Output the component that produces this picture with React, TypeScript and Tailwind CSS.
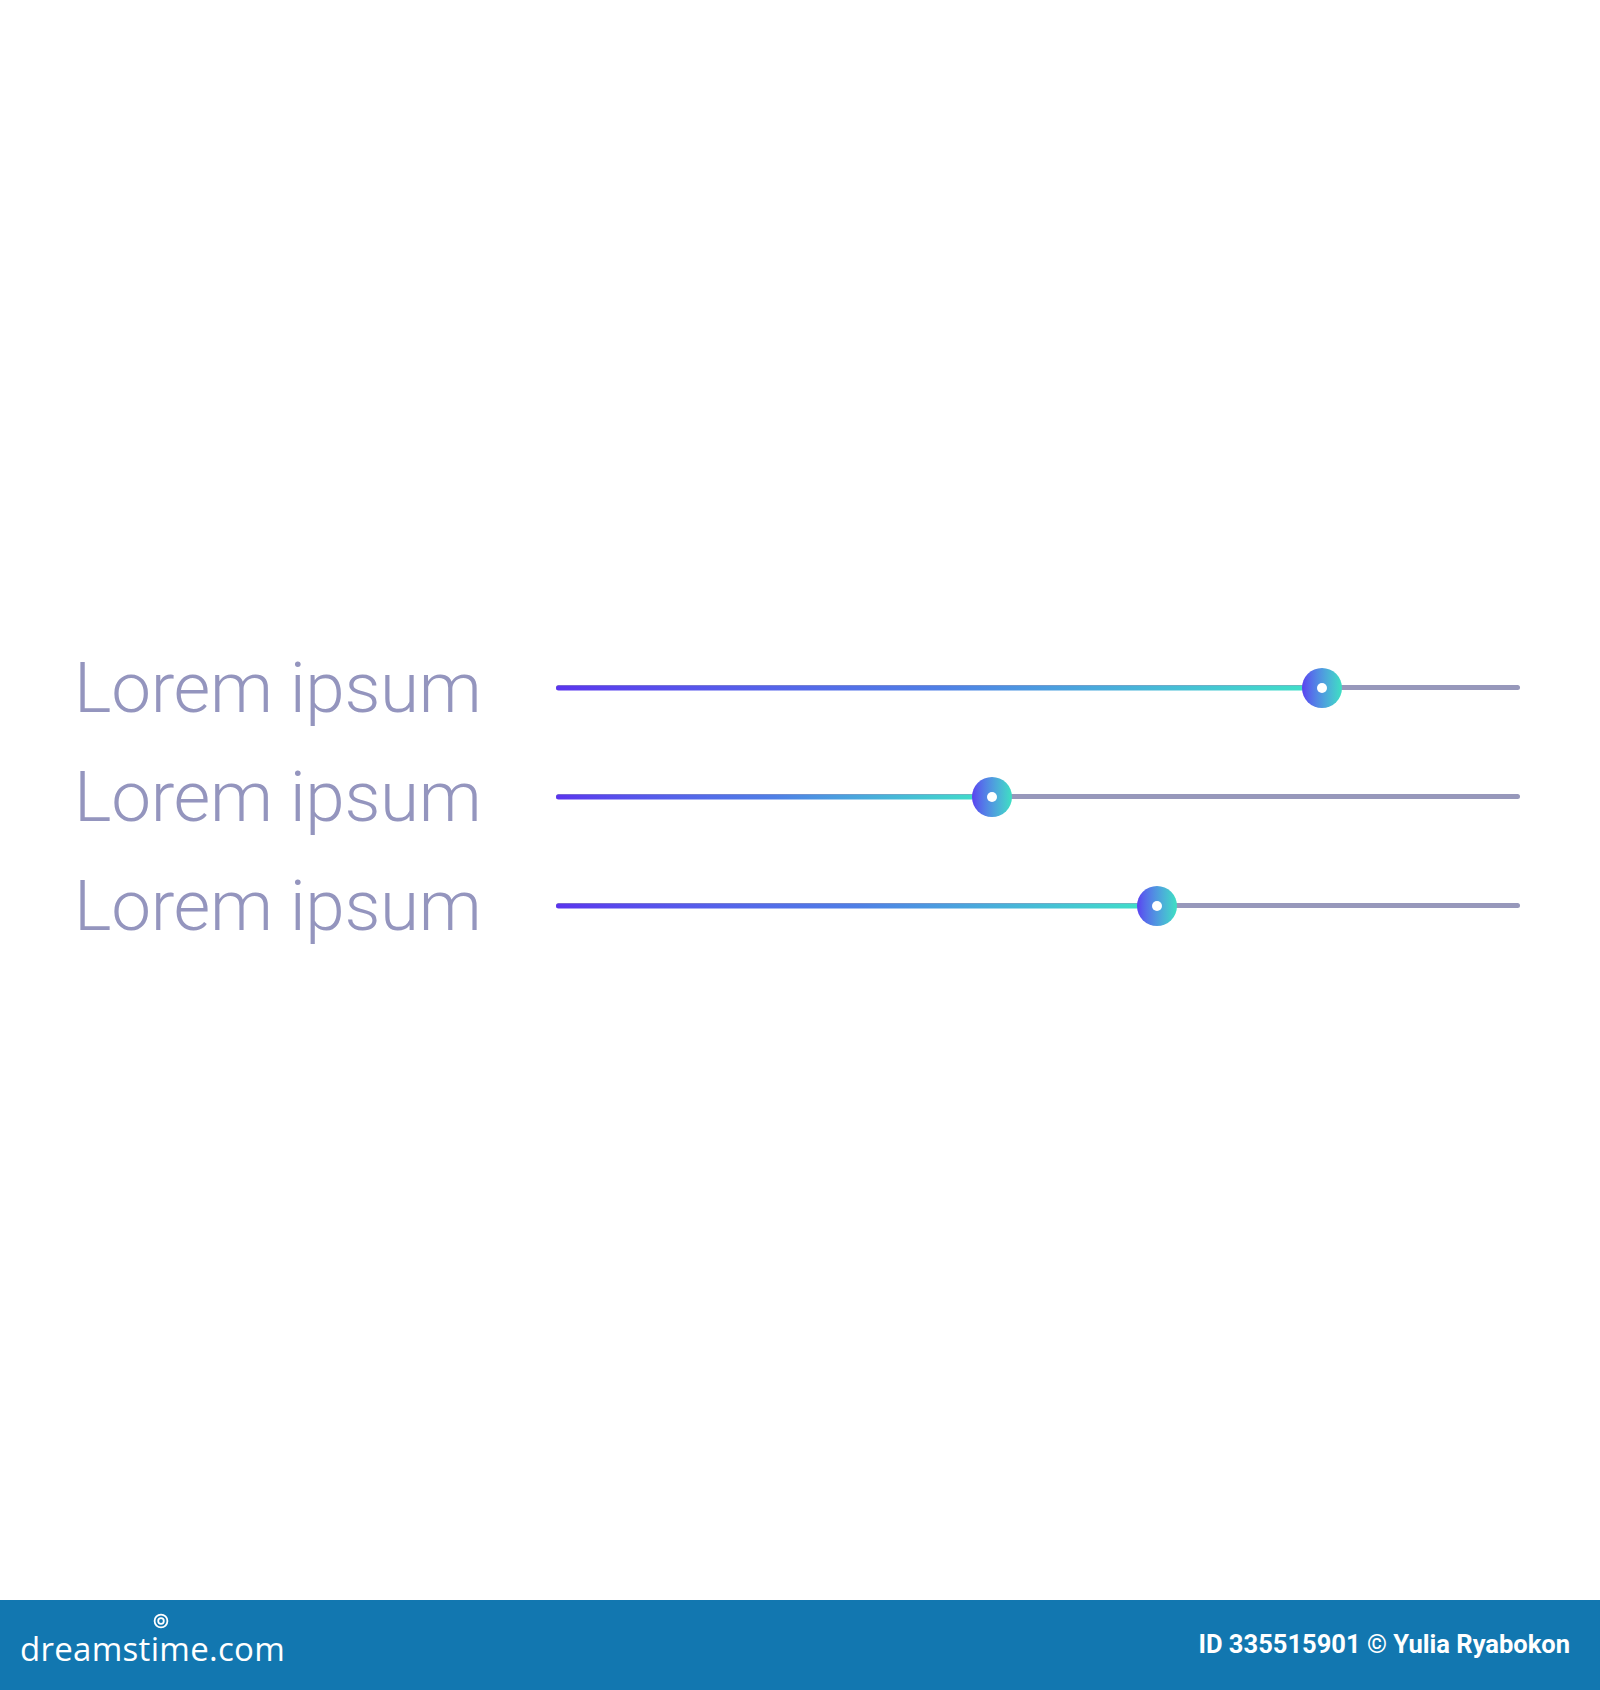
import React from "react";

type Row = { label: string; value: number };

const rows: Row[] = [
  { label: "Lorem ipsum", value: 0.795 },
  { label: "Lorem ipsum", value: 0.452 },
  { label: "Lorem ipsum", value: 0.623 },
];

function Slider({ value }: { value: number }) {
  const pct = `${value * 100}%`;
  return (
    <div className="relative h-[40px] w-[964px] flex items-center">
      <div className="h-[5px] w-full bg-[#9798bb] rounded-full" />
      <div
        className="absolute left-0 top-1/2 -translate-y-1/2 h-[5px] rounded-l-full bg-gradient-to-r from-[#5a34ee] via-[#4f7fe6] to-[#3fe3c6]"
        style={{ width: pct }}
      />
      <div
        className="absolute top-1/2 -translate-x-1/2 -translate-y-1/2 h-[40px] w-[40px] rounded-full bg-gradient-to-r from-[#5a3ff0] to-[#3ee0c2] flex items-center justify-center"
        style={{ left: pct }}
      >
        <div className="h-[10px] w-[10px] rounded-full bg-white" />
      </div>
    </div>
  );
}

function Swirl() {
  return (
    <svg width="16" height="16" viewBox="0 0 16 16" fill="none">
      <circle cx="8" cy="8" r="6.4" stroke="white" strokeWidth="1.8" />
      <circle cx="8" cy="8" r="2.8" stroke="white" strokeWidth="1.8" />
    </svg>
  );
}

export default function App() {
  return (
    <div className="w-[1600px] h-[1690px] bg-white flex flex-col" style={{ fontFamily: "Roboto, 'Liberation Sans', sans-serif" }}>
      <div className="flex-1 flex flex-col pt-[633px]">
        {rows.map((r, i) => (
          <div key={i} className="h-[109px] flex items-center">
            <div className="w-[556px] pl-[74px]">
              <span className="text-[71px] leading-none font-light text-[#9495be] tracking-[-0.3px]">
                {r.label}
              </span>
            </div>
            <Slider value={r.value} />
          </div>
        ))}
      </div>
      <div className="h-[90px] bg-[#1277b0] flex items-center justify-between pl-[20px] pr-[30px]">
        <div className="relative pt-[10px]">
          <span
            className="text-white text-[33px] font-medium leading-none tracking-[0.3px]"
            style={{ fontFamily: "'Open Sans', 'Noto Sans', sans-serif" }}
          >
            dreamstime.com
          </span>
          <div className="absolute left-[133px] top-[-9px]">
            <Swirl />
          </div>
        </div>
        <span className="text-white text-[25.5px] font-bold leading-none">
          ID 335515901 © Yulia Ryabokon
        </span>
      </div>
    </div>
  );
}
